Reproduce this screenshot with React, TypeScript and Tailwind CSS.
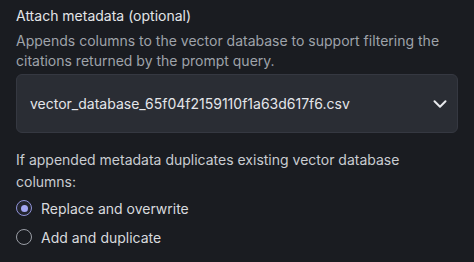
import React, { useState } from 'react';
import { ChevronDown } from 'lucide-react';

const options = [
  { id: 'replace', label: 'Replace and overwrite' },
  { id: 'add', label: 'Add and duplicate' },
];

export default function App() {
  const [mode, setMode] = useState('replace');

  return (
    <div
      className="w-[474px] h-[262px] bg-[#1a1c21] px-[16px] pt-[6px] text-[14px] overflow-hidden"
      style={{ fontFamily: 'Inter, "Noto Sans", sans-serif' }}
    >
      <div className="text-[#e3e5e8] leading-[20px]">Attach metadata (optional)</div>
      <p className="mt-[5px] text-[#9fa3aa] leading-[20px]">
        Appends columns to the vector database to support filtering the citations returned by the prompt query.
      </p>

      {/* селект с файлом */}
      <button className="mt-[3px] w-[442px] h-[59px] flex items-center justify-between pl-[13px] pr-[6px] rounded-[6px] bg-[#2a2d34] border border-[#353841] text-[#e4e6ea] text-[14px]">
        <span>vector_database_65f04f2159110f1a63d617f6.csv</span>
        <ChevronDown size={22} strokeWidth={2.2} className="text-[#e8eaed]" />
      </button>

      <p className="mt-[16px] text-[#c9ccd1] leading-[22px] pr-[40px]">
        If appended metadata duplicates existing vector database columns:
      </p>

      <div className="mt-[1px] flex flex-col gap-[1px]">
        {options.map((o) => {
          const checked = mode === o.id;
          return (
            <label key={o.id} className="h-[28px] flex items-center gap-[9px] cursor-pointer" onClick={() => setMode(o.id)}>
              <span
                className={`w-[16px] h-[16px] rounded-full border-[1.5px] flex items-center justify-center ${
                  checked ? 'border-[#8f92d8] bg-[#23252f]' : 'border-[#9a9ea6]'
                }`}
              >
                {checked && <span className="w-[7px] h-[7px] rounded-full bg-[#a3a6f2]" />}
              </span>
              <span className="text-[#d8dade]">{o.label}</span>
            </label>
          );
        })}
      </div>
    </div>
  );
}
